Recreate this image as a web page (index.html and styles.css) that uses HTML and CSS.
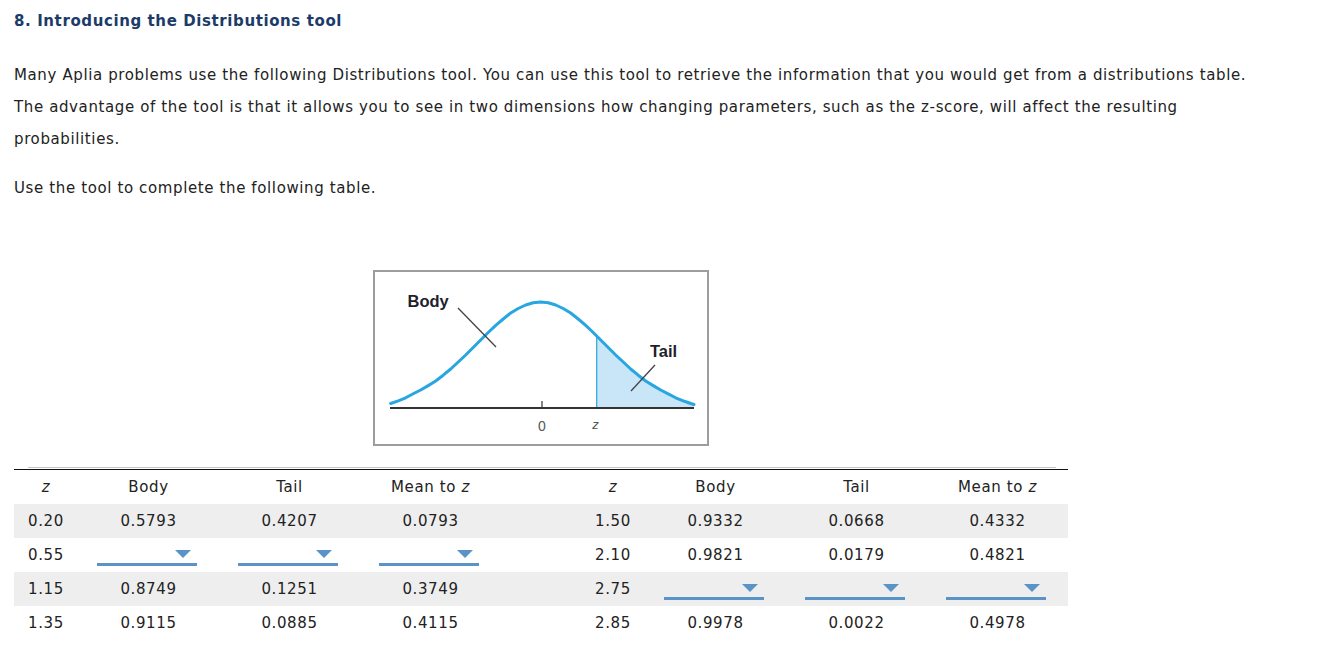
FILE: index.html
```html
<!DOCTYPE html>
<html>
<head>
<meta charset="utf-8">
<link rel="stylesheet" href="styles.css">
</head>
<body>
<div class="page">
  <h2 class="title">8. Introducing the Distributions tool</h2>
  <p class="para">Many Aplia problems use the following Distributions tool. You can use this tool to retrieve the information that you would get from a distributions table. The advantage of the tool is that it allows you to see in two dimensions how changing parameters, such as the z-score, will affect the resulting probabilities.</p>
  <p class="para para2">Use the tool to complete the following table.</p>

  <div class="tool">
    <div class="figure">
      <svg width="332" height="172" viewBox="376 272 332 172" xmlns="http://www.w3.org/2000/svg">
        <polygon fill="#c9e5f8" points="597.7,336 601.7,340 616.7,355 631.7,369 646.7,381 661.7,390 676.7,397 691.7,401.5 695,403 695,408 597.7,408"/>
        <line x1="597.7" y1="336" x2="597.7" y2="408" stroke="#2aa5dd" stroke-width="1.2"/>
        <line x1="391" y1="408" x2="695" y2="408" stroke="#333" stroke-width="2"/>
        <line x1="543" y1="401" x2="543" y2="408" stroke="#333" stroke-width="1.2"/>
        <polyline fill="none" stroke="#27a6e1" stroke-width="3" stroke-linejoin="round" stroke-linecap="round"
          points="391.7,403.5 399.2,400.8 406.7,397.8 414.2,393.8 421.7,390 429.2,385.6 436.7,381 444.2,375.2 451.7,369 459.2,362 466.7,355 474.2,347.5 481.7,340 489.2,332.5 496.7,325.4 504.2,319 511.7,313 519.2,308.5 526.7,305 534.2,302.8 541.7,302 549.2,302.8 556.7,305 564.2,308.5 571.7,313 579.2,319 586.7,325.4 594.2,332.5 601.7,340 609.2,347.5 616.7,355 624.2,362 631.7,369 639.2,375.2 646.7,381 654.2,385.6 661.7,390 669.2,393.8 676.7,397.8 684.2,400.8 691.7,403.5 695,404.5"/>
        <line x1="459" y1="308" x2="497" y2="347" stroke="#444" stroke-width="1.3"/>
        <line x1="632" y1="391" x2="656" y2="365" stroke="#444" stroke-width="1.3"/>
        <text x="408.5" y="307" class="lbl">Body</text>
        <text x="651" y="357" class="lbl">Tail</text>
        <text x="543" y="431" class="axis" text-anchor="middle">0</text>
        <text x="596.5" y="429" class="axis axis-z" text-anchor="middle">z</text>
      </svg>
    </div>

    <div class="rule"></div>
    <table class="dist">
      <colgroup>
        <col class="c-z"><col class="c-v"><col class="c-v"><col class="c-v"><col class="c-gap"><col class="c-z"><col class="c-v"><col class="c-v"><col class="c-v">
      </colgroup>
      <thead>
        <tr><th><i>z</i></th><th>Body</th><th>Tail</th><th>Mean to <i>z</i></th><th></th><th><i>z</i></th><th>Body</th><th>Tail</th><th>Mean to <i>z</i></th></tr>
      </thead>
      <tbody>
        <tr class="alt"><td>0.20</td><td>0.5793</td><td>0.4207</td><td>0.0793</td><td></td><td>1.50</td><td>0.9332</td><td>0.0668</td><td>0.4332</td></tr>
        <tr><td>0.55</td><td><div class="dd"><span class="tri"></span></div></td><td><div class="dd"><span class="tri"></span></div></td><td><div class="dd"><span class="tri"></span></div></td><td></td><td>2.10</td><td>0.9821</td><td>0.0179</td><td>0.4821</td></tr>
        <tr class="alt"><td>1.15</td><td>0.8749</td><td>0.1251</td><td>0.3749</td><td></td><td>2.75</td><td><div class="dd"><span class="tri"></span></div></td><td><div class="dd"><span class="tri"></span></div></td><td><div class="dd"><span class="tri"></span></div></td></tr>
        <tr><td>1.35</td><td>0.9115</td><td>0.0885</td><td>0.4115</td><td></td><td>2.85</td><td>0.9978</td><td>0.0022</td><td>0.4978</td></tr>
      </tbody>
    </table>
  </div>
</div>
</body>
</html>
```

FILE: styles.css
```css
html, body {
  margin: 0;
  padding: 0;
  background: #fff;
}
.page {
  padding: 11px 14px 0 14px;
  font-family: "DejaVu Sans", Verdana, sans-serif;
  font-size: 15px;
  letter-spacing: 0.62px;
  color: #222;
}
.title {
  margin: 0;
  font-size: 15px;
  line-height: 20px;
  font-weight: bold;
  letter-spacing: 0.6px;
  color: #1b3c68;
}
.para {
  margin: 28px 0 0 0;
  line-height: 32px;
  max-width: 1262px;
}
.para2 {
  margin-top: 17px;
}
.tool {
  width: 1054px;
  margin-top: 66px;
}
.figure {
  width: 332px;
  height: 172px;
  margin: 0 auto;
  border: 2px solid #9d9d9d;
  background: #fff;
}
.figure svg {
  display: block;
  letter-spacing: 0;
}
.lbl {
  font-family: "Liberation Sans", Arial, sans-serif;
  font-weight: bold;
  font-size: 16.5px;
  fill: #1f1f2e;
}
.axis {
  font-family: "Liberation Sans", Arial, sans-serif;
  font-size: 14px;
  fill: #555;
}
.axis-z {
  font-style: italic;
  font-size: 13px;
}
.rule {
  height: 1px;
  background: #c4c4c4;
  margin: 21px 12px 0 14px;
}
.dist {
  width: 1054px;
  margin-top: 1px;
  border-collapse: collapse;
  table-layout: fixed;
  border-top: 1px solid #111;
}
.c-z { width: 64px; }
.c-v { width: 141px; }
.c-gap { width: 80px; }
.dist th,
.dist td {
  height: 34px;
  padding: 0;
  text-align: center;
  vertical-align: middle;
  font-weight: normal;
  color: #222;
}
.dist tr.alt td {
  background: #eeeeee;
}
.dd {
  width: 100px;
  height: 13px;
  margin: 6px 0 0 19px;
  border-bottom: 3px solid #5a93c7;
  display: flex;
  justify-content: flex-end;
  align-items: flex-start;
}
.tri {
  width: 0;
  height: 0;
  margin-right: 6px;
  border-left: 8.5px solid transparent;
  border-right: 8.5px solid transparent;
  border-top: 8px solid #5a93c7;
}
```
